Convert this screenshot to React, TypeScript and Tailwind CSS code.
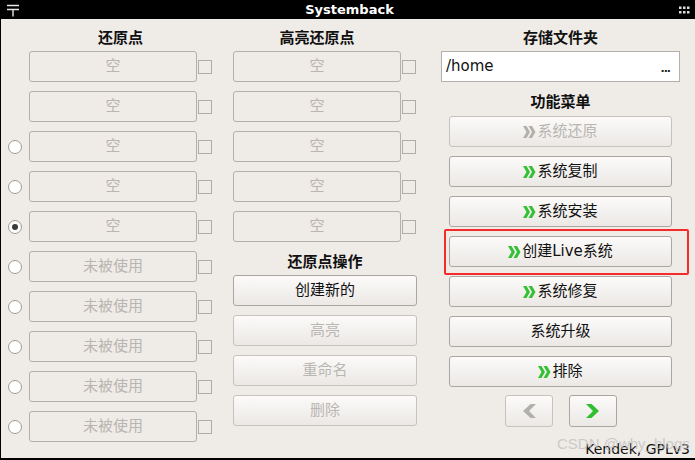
import React from 'react';

const FONT = { fontFamily: '"DejaVu Sans", "Noto Sans CJK SC", sans-serif' };

function Chevrons({ gray = false }: { gray?: boolean }) {
  const c = gray ? '#b3b0ac' : '#36c036';
  return (
    <svg width="13" height="12" viewBox="0 0 13 12" className="mr-[1px]">
      <polygon points="0,0 3.5,0 7,6 3.5,12 0,12 3.5,6" fill={c} />
      <polygon points="5.5,0 9,0 12.5,6 9,12 5.5,12 9,6" fill={c} />
    </svg>
  );
}

function Radio({ checked = false }: { checked?: boolean }) {
  return (
    <div className="w-[14px] h-[14px] rounded-full border border-[#9d9995] bg-white flex items-center justify-center">
      {checked && <div className="w-[6px] h-[6px] rounded-full bg-[#3a3a3a]" />}
    </div>
  );
}

function Check() {
  return <div className="w-[14px] h-[14px] border border-[#b0aca8] bg-[#efebe7]" />;
}

function FlatBtn({ label, w }: { label: string; w: string }) {
  return (
    <div className={`${w} h-[31px] rounded-[3px] border border-[#b3afab] flex items-center justify-center text-[15px] text-[#b9b5b1]`}>
      {label}
    </div>
  );
}

function Btn({ children, w, disabled = false }: { children: React.ReactNode; w: string; disabled?: boolean }) {
  return (
    <div
      className={`${w} h-[31px] rounded-[3px] border ${disabled ? 'border-[#c6c2be] text-[#bab6b2]' : 'border-[#aaa6a2] text-[#111]'} bg-gradient-to-b from-[#fcfbfa] to-[#ebe8e5] flex items-center justify-center text-[15px]`}
    >
      {children}
    </div>
  );
}

export default function App() {
  const restore = ['空', '空', '空', '空', '空', '未被使用', '未被使用', '未被使用', '未被使用', '未被使用'];
  const menu: { label: string; chev: boolean; disabled?: boolean }[] = [
    { label: '系统还原', chev: true, disabled: true },
    { label: '系统复制', chev: true },
    { label: '系统安装', chev: true },
    { label: '创建Live系统', chev: true },
    { label: '系统修复', chev: true },
    { label: '系统升级', chev: false },
    { label: '排除', chev: true },
  ];

  return (
    <div className="relative w-[695px] h-[460px] overflow-hidden bg-[#efebe7] border-l border-b-2 border-black" style={FONT}>
      {/* title bar */}
      <div className="h-[19px] bg-black flex items-center justify-between px-[5px]">
        <svg width="14" height="14" viewBox="0 0 14 14">
          <path d="M1 2.5H13M1 6.5H13M7 6.5V13.5" stroke="#e6e6e6" strokeWidth="1.4" fill="none" />
        </svg>
        <span className="text-white text-[13px] font-bold leading-none">Systemback</span>
        <svg width="12" height="8" viewBox="0 0 12 8" className="mr-[-1px]">
          {[0, 4, 8].map((x) => (
            <g key={x}>
              <rect x={x} y={0.5} width={2.5} height={2.5} fill="#ddd" />
              <rect x={x} y={5} width={2.5} height={2.5} fill="#ddd" />
            </g>
          ))}
        </svg>
      </div>

      <div className="flex">
        {/* column 1 */}
        <div className="flex flex-col w-[211px]">
          <div className="pt-[6px] h-[32px] pl-[28px]">
            <div className="h-[26px] leading-[26px] text-center text-[15px] font-bold text-[#111] w-[183px]">还原点</div>
          </div>
          <div className="flex flex-col gap-[9px]">
            {restore.map((l, i) => (
              <div key={i} className="flex items-center h-[31px]">
                <div className="w-[28px] pl-[7px]">{i >= 2 && <Radio checked={i === 4} />}</div>
                <FlatBtn label={l} w="w-[168px]" />
                <div className="ml-[1px]">
                  <Check />
                </div>
              </div>
            ))}
          </div>
        </div>

        {/* column 2 */}
        <div className="flex flex-col ml-[21px] w-[184px]">
          <div className="pt-[6px] h-[32px]">
            <div className="h-[26px] leading-[26px] text-center text-[15px] font-bold text-[#111] w-[168px]">高亮还原点</div>
          </div>
          <div className="flex flex-col gap-[9px]">
            {[0, 1, 2, 3, 4].map((i) => (
              <div key={i} className="flex items-center h-[31px]">
                <FlatBtn label="空" w="w-[168px]" />
                <div className="ml-[1px]">
                  <Check />
                </div>
              </div>
            ))}
          </div>
          <div className="pt-[8px] h-[33px]">
            <div className="leading-[24px] text-center text-[15px] font-bold text-[#111]">还原点操作</div>
          </div>
          <div className="flex flex-col gap-[9px]">
            <Btn w="w-[184px]">创建新的</Btn>
            <Btn w="w-[184px]" disabled>高亮</Btn>
            <Btn w="w-[184px]" disabled>重命名</Btn>
            <Btn w="w-[184px]" disabled>删除</Btn>
          </div>
        </div>

        {/* column 3 */}
        <div className="flex flex-col ml-[24px] w-[239px]">
          <div className="pt-[6px] h-[32px]">
            <div className="h-[26px] leading-[26px] text-center text-[15px] font-bold text-[#111]">存储文件夹</div>
          </div>
          <div className="h-[31px] bg-white border border-[#b3afab] flex items-center justify-between pl-[4px] pr-[9px]">
            <span className="text-[15px] text-[#111]">/home</span>
            <span className="text-[11px] font-bold text-[#222] tracking-[-1px] leading-none pt-[4px]">...</span>
          </div>
          <div className="pt-[8px] h-[34px]">
            <div className="leading-[24px] text-center text-[15px] font-bold text-[#111]">功能菜单</div>
          </div>
          <div className="flex flex-col gap-[9px] pl-[8px]">
            {menu.map((m) => (
              <Btn key={m.label} w="w-[223px]" disabled={m.disabled}>
                {m.chev && <Chevrons gray={m.disabled} />}
                <span className={m.disabled ? 'text-[#b9b5b1]' : 'text-[#111]'}>{m.label}</span>
              </Btn>
            ))}
            <div className="flex gap-[16px] pl-[56px] mt-[-1px]">
              <div className="w-[48px] h-[32px] rounded-[3px] border border-[#c6c2be] bg-gradient-to-b from-[#fcfbfa] to-[#ebe8e5] flex items-center justify-center">
                <svg width="16" height="16" viewBox="0 0 16 16">
                  <polygon points="15,1 9.5,1 2,8 9.5,15 15,15 8,8" fill="#b3b0ac" />
                </svg>
              </div>
              <div className="w-[48px] h-[32px] rounded-[3px] border border-[#aaa6a2] bg-gradient-to-b from-[#fcfbfa] to-[#ebe8e5] flex items-center justify-center">
                <svg width="16" height="16" viewBox="0 0 16 16">
                  <polygon points="1,1 6.5,1 14,8 6.5,15 1,15 8,8" fill="#2fbf2f" />
                </svg>
              </div>
            </div>
          </div>
        </div>
      </div>

      {/* annotation box */}
      <div className="absolute left-[443px] top-[229px] w-[245px] h-[46px] border-2 border-[#f52a2a] rounded-[2px]" />

      {/* footer text + watermark */}
      <div className="absolute right-[5px] top-[439px] text-[14px] text-[#111] leading-[20px]">Kendek, GPLv3</div>
      <div className="absolute left-[556px] top-[434px] text-[15px] text-[#bdbdbd] opacity-70 leading-[20px]" style={{ fontFamily: '"Liberation Sans", Arial, sans-serif' }}>
        CSDN @why_blogs
      </div>
    </div>
  );
}
